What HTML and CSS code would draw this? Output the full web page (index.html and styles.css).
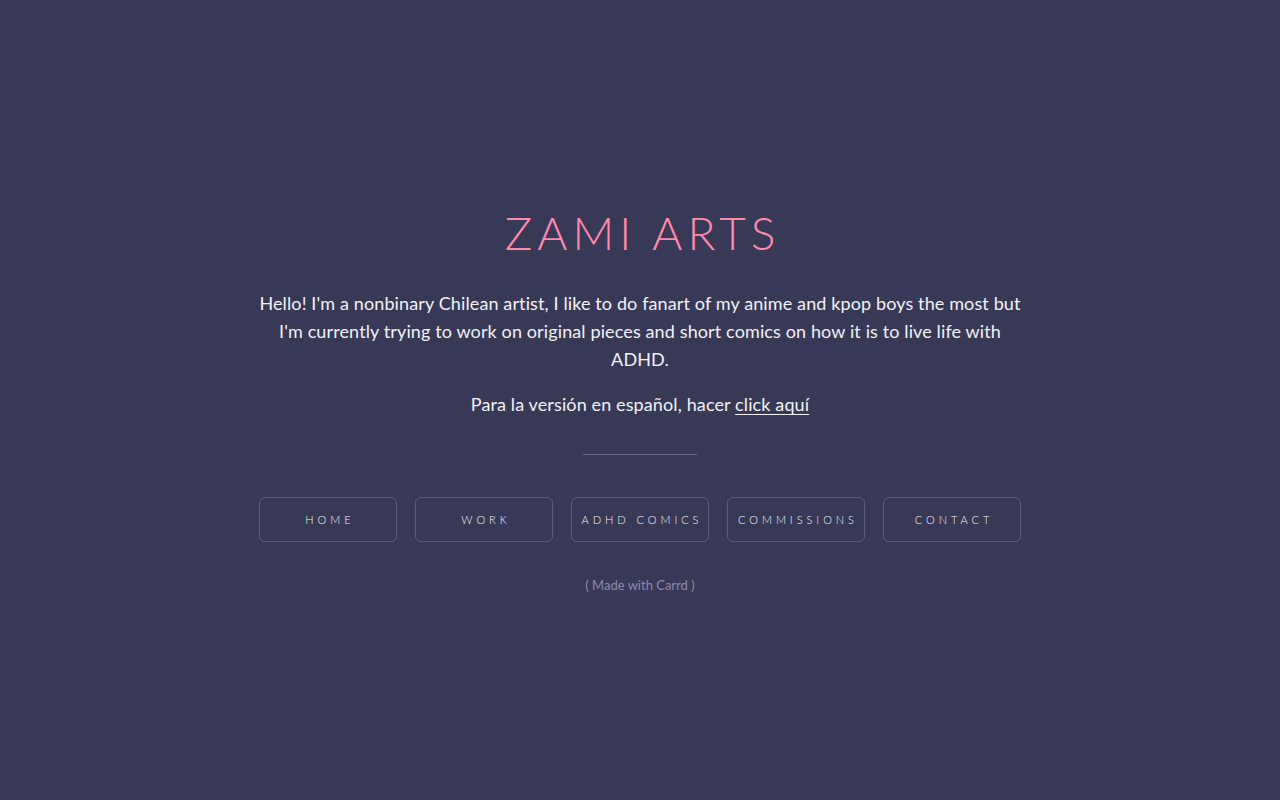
FILE: index.html
```
<!DOCTYPE html>
<html lang="en">
<head>
    <meta charset="UTF-8">
    <meta name="viewport" content="width=device-width, initial-scale=1.0">
    <title>Zami Arts</title>
    <link rel="stylesheet" href="styles.css">
</head>
<body>
    <div class="wrapper">
        <div class="container">
            <h1 class="title">ZAMI ARTS</h1>
            <p class="intro">Hello! I'm a nonbinary Chilean artist, I like to do fanart of my anime and kpop boys the most but I'm currently trying to work on original pieces and short comics on how it is to live life with ADHD.</p>
            <p class="intro">Para la versión en español, hacer <a href="#">click aquí</a></p>
            <hr class="divider">
            <nav class="buttons">
                <a href="#" class="button">HOME</a>
                <a href="#" class="button">WORK</a>
                <a href="#" class="button">ADHD COMICS</a>
                <a href="#" class="button">COMMISSIONS</a>
                <a href="#" class="button">CONTACT</a>
            </nav>
            <p class="credit">( Made with Carrd )</p>
        </div>
    </div>
</body>
</html>
```

FILE: styles.css
```
html, body {
    margin: 0;
    padding: 0;
    height: 100%;
}
body {
    font-family: Lato, "Noto Sans", sans-serif;
    background-color: #383857;
    color: #f2f2f7;
}
.wrapper {
    min-height: 100%;
    display: flex;
    align-items: flex-start;
    justify-content: center;
    padding-top: 204px;
    box-sizing: border-box;
}
.container {
    width: 762px;
    display: flex;
    flex-direction: column;
    align-items: center;
    text-align: center;
}
.title {
    margin: 0;
    font-weight: 300;
    font-size: 46px;
    line-height: 58px;
    letter-spacing: 0.11em;
    padding-left: 0.11em;
    color: #ff8aab;
}
.intro {
    margin: 0;
    font-size: 18px;
    line-height: 28px;
    font-weight: 400;
    letter-spacing: 0.12px;
}
.title + .intro {
    margin-top: 27px;
}
.intro + .intro {
    margin-top: 17px;
}
.intro a {
    color: #f2f2f7;
    text-decoration: underline;
    text-underline-offset: 3px;
}
.divider {
    width: 114px;
    height: 0;
    margin: 36px 0 0 0;
    border: 0;
    border-top: 1px solid rgba(255, 255, 255, 0.25);
}
.buttons {
    display: flex;
    gap: 18px;
    margin-top: 42px;
}
.button {
    width: 138px;
    height: 45px;
    box-sizing: border-box;
    display: flex;
    align-items: center;
    justify-content: center;
    border: 1px solid rgba(255, 255, 255, 0.18);
    border-radius: 6px;
    color: #f6f6fb;
    text-decoration: none;
    font-size: 11px;
    font-weight: 300;
    letter-spacing: 0.36em;
    padding-left: 0.36em;
}
.credit {
    margin: 35px 0 0 0;
    font-size: 13px;
    line-height: 16px;
    color: #8d8dab;
}
```
